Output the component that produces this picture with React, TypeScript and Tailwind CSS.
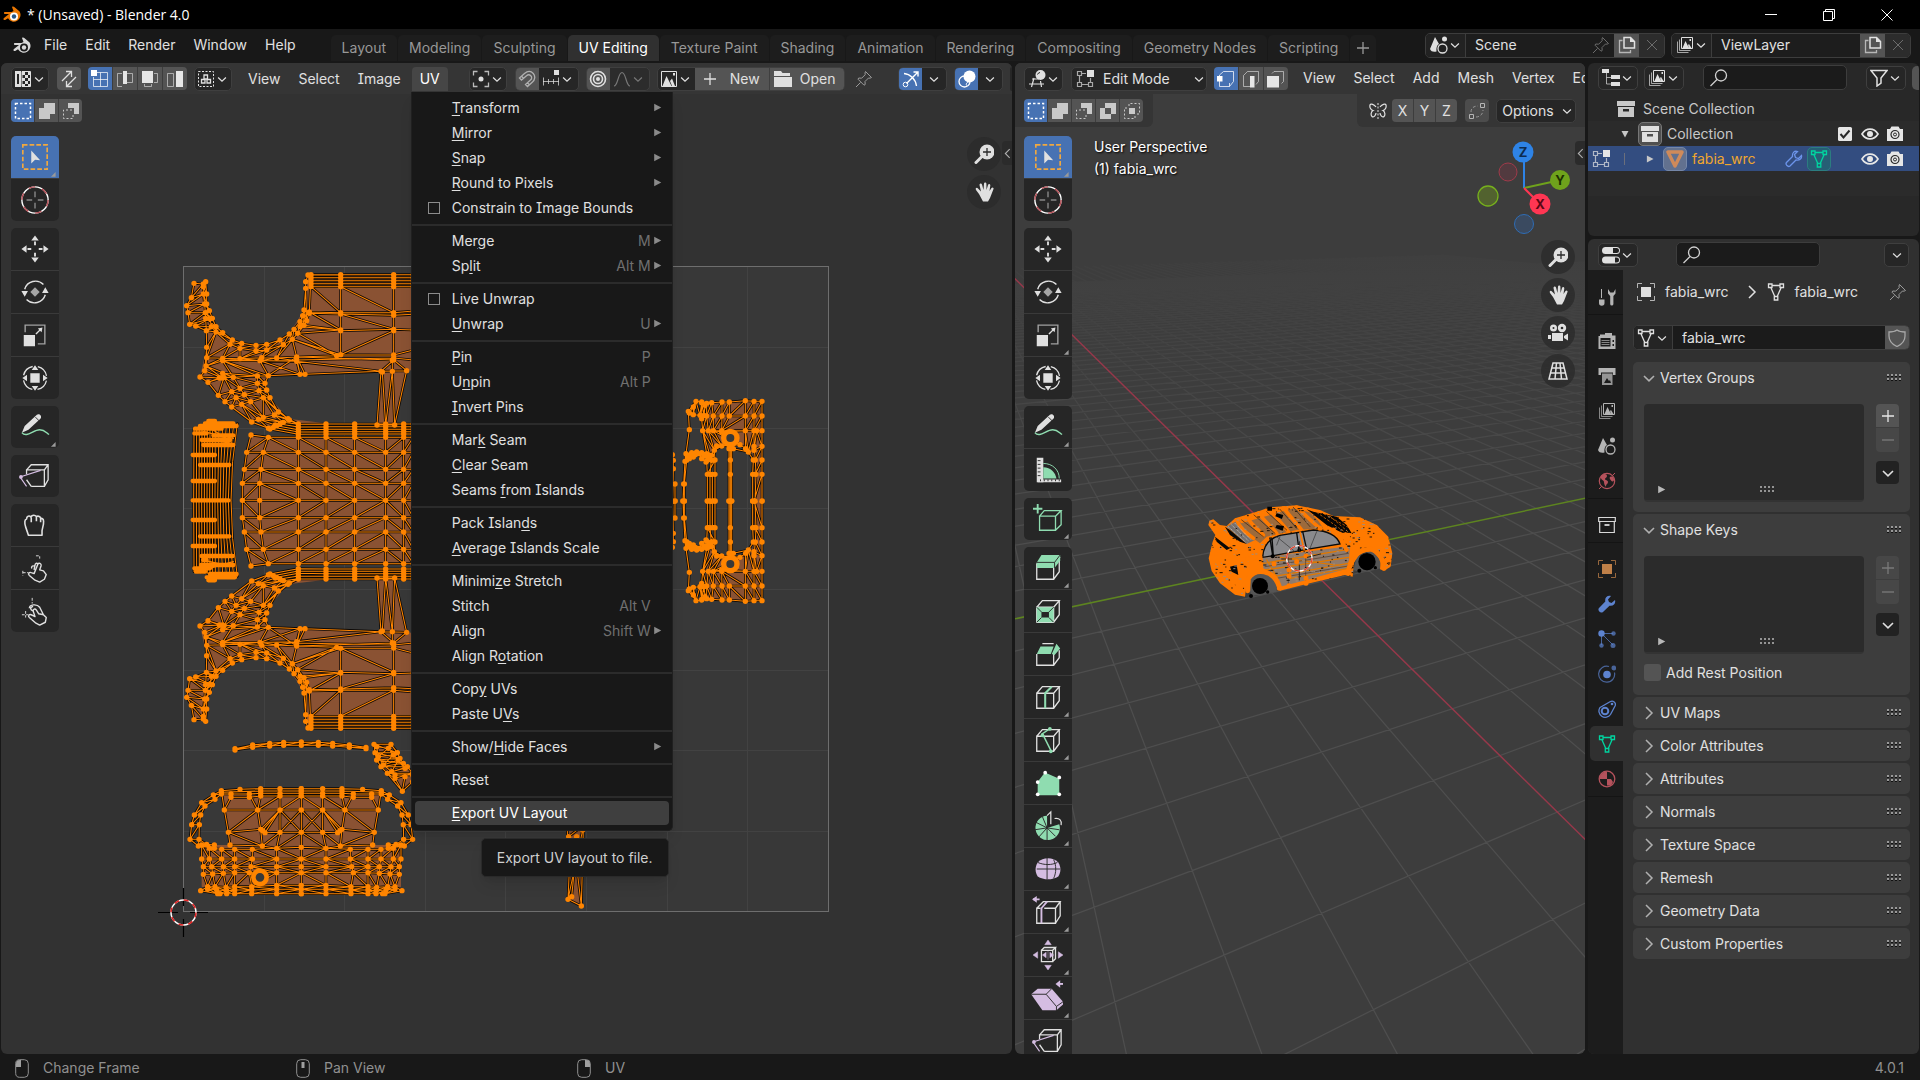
import React from "react";

/* ---------- small icons, 18 x 18 ---------- */

const I = "fill-none stroke-current";

const glyphs: Record<string, React.ReactNode> = {
  uvEditor: (
    <>
      <path d="M1 1h6v16H1zM3 4h2v10H3z" fill="currentColor" fillRule="evenodd" />
      <path d="M8 1.5h8.5v15H8z" className={I} />
      <path d="M8 2h3v3h3v3h-3v3h3v3h-3v2H8v-2h3v-3H8V8h3V5H8zM14 2h2v3h-2zM14 8h2v3h-2zM14 14h2v2h-2z" fill="currentColor" />
    </>
  ),
  sync: <path className={I} strokeWidth="1.3" d="M2 11 11 2M6 1.500h5.500V7M16 7 7 16M12 16.500H6.500V11" />,
  vertMode: (
    <>
      <path className={I} opacity=".7" d="M6 2.500h10.500v14H2.500V7M9.500 2.500v14M2.500 9.500h14" />
      <path d="M0 0h6v6H0z" fill="currentColor" />
    </>
  ),
  edgeMode: (
    <>
      <path className={I} opacity=".6" d="M6 3.500H1.500v13H6M11 3.500h5.500v9H11" />
      <path d="M7 1h4v13H7z" fill="currentColor" />
    </>
  ),
  faceMode: (
    <>
      <path className={I} opacity=".6" d="M3.500 14v2.500h7V14M13 3.500h3.500v9H13" />
      <path d="M1 1h11v12H1z" fill="currentColor" />
    </>
  ),
  islandMode: (
    <>
      <path className={I} opacity=".6" d="M1.500 3.500h6v13h-6z" />
      <path d="M10 1h7v16h-7z" fill="currentColor" />
    </>
  ),
  sticky: (
    <>
      <path className={I} strokeDasharray="2 1.500" d="M1.500 1.500h15v15h-15z" />
      <path className={I} strokeWidth="1.300" d="M7 5h3.500v4H7zM4.500 9.500H8V13H4.500zM10 9.500h3.500V13H10z" />
    </>
  ),
  pivot: (
    <>
      <path className={I} opacity=".8" strokeWidth="1.300" d="M1.500 5.500v-4h4M12.500 1.500h4v4M16.500 12.500v4h-4M5.500 16.500h-4v-4" />
      <circle cx="9" cy="9" r="2.500" fill="currentColor" />
    </>
  ),
  magnet: (
    <path className={I} strokeWidth="1.300" d="M1.500 8 6.500 3.500C9.500 1 13 1 15.300 3.500S17 10 14.500 12L9.500 16.500 7.500 14.500 12.500 10C14 8.700 14 7 12.800 5.800S9.700 4.700 8.500 5.800L3.500 10zM3.500 6.200 5.500 8.200M11.500 15 9.500 12.800" />
  ),
  snapInc: (
    <>
      <path className={I} opacity=".75" d="M1 11.500h16M1.500 7.500v8M6.500 9v5M11.500 9v5M16.500 7.500v8" />
      <path d="M12 0h5v5h-5z" fill="currentColor" />
    </>
  ),
  prop: (
    <>
      <circle cx="9" cy="9" r="7.500" className={I} strokeWidth="1.600" />
      <circle cx="9" cy="9" r="4.500" className={I} strokeWidth="1.600" />
      <circle cx="9" cy="9" r="2" fill="currentColor" />
    </>
  ),
  falloff: <path className={I} strokeWidth="1.200" d="M1 16C5 16 5 2.500 9 2.500S13 16 17 16" />,
  image: (
    <>
      <path className={I} d="M1.500 1.500h15v15h-15z" />
      <path d="M2.500 16 6.500 6l5 10zM13 3h2v2.500h-2z" fill="currentColor" />
      <path d="M10 11l2-2.500 3 7.500h-3z" fill="currentColor" />
    </>
  ),
  images: (
    <>
      <path className={I} opacity=".7" d="M1.500 5.500v11h11M3.500 3.500v11h11" />
      <path className={I} d="M5.500 1.500h11v11h-11z" />
      <path d="M6.500 12 9.500 5l3.500 7zM13.500 3h1.500v2h-1.500zM12 9l1-1 2.500 4H13z" fill="currentColor" />
    </>
  ),
  plus: <path className={I} strokeWidth="1.300" d="M9 3v12M3 9h12" />,
  minus: <path className={I} strokeWidth="1.300" d="M3 9h12" />,
  folder: <path d="M0 1h7l1.500 2H16v3H0zM0 7h18v10H0z" fill="currentColor" />,
  pin: <path className={I} d="M10.500 1.500l6 6-1.500.7-1.500-.2-3.500 3.500.2 3-1.200.7-6-6 .7-1.200 3 .2L10.200 4.700 10 3zM5.500 12.500 1 17" />,
  gizmo: (
    <>
      <path className={I} strokeWidth="1.400" d="M2 3.500C8 4 13.500 9 14.500 16M4.500 13.500 15.500 2.500M11.500 2H16v4.500" />
      <circle cx="3.500" cy="14.500" r="2.300" className={I} />
    </>
  ),
  overlay: (
    <>
      <circle cx="6.500" cy="11.500" r="5.500" className={I} strokeWidth="1.300" />
      <circle cx="11.500" cy="6.500" r="6" fill="currentColor" />
      <path d="M8.500 15.500a2.500 2.500 0 0 1 2-3.500" className={I} />
    </>
  ),
  view3d: (
    <>
      <path className={I} strokeWidth="1.200" d="M4 9h7M1 14h15M6 8 3.500 17M12.500 11l1 6" />
      <circle cx="12.500" cy="5" r="5" fill="currentColor" />
      <path d="M9.500 4.500a3 3 0 0 1 2.500-2" stroke="#222" fill="none" />
    </>
  ),
  editMode: (
    <>
      <path className={I} opacity=".7" strokeWidth="1.200" d="M1.500 1.500h4v4h-4zM1.500 12.500h4v4h-4zM12.500 12.500h4v4h-4zM3.500 5.500v7M5.500 14.500h7M5.500 3.500H10M14.500 8v4.500" />
      <path d="M11 0h7v7h-7z" fill="currentColor" />
    </>
  ),
  cubeVert: (
    <>
      <path className={I} opacity=".75" d="M2.500 5 6.500 1.500h10v10l-4 5h-10zM12.500 16.500V13" />
      <path d="M0 6h5.500v5.500H0z" fill="currentColor" />
    </>
  ),
  cubeEdge: (
    <>
      <path className={I} opacity=".6" d="M9.500 16.500h-8v-11l4-4h11v10l-2.500 3" />
      <path d="M8 6h4.500v11.500H8z" fill="currentColor" />
    </>
  ),
  cubeFace: (
    <>
      <path className={I} opacity=".6" d="M5 3.500l2-2h9.500v10l-2 2" />
      <path d="M0 6h12v11.500H0z" fill="currentColor" />
    </>
  ),
  selBox: <path className={I} strokeWidth="1.500" strokeDasharray="2.500 2" d="M1.500 1.500h15v15h-15z" />,
  selAdd: <path d="M6 1h11v11h-5v5H1V6h5z" fill="currentColor" opacity=".8" />,
  selSub: (
    <>
      <path d="M6 1h11v11h-5V6H6z" fill="currentColor" opacity=".8" />
      <path className={I} opacity=".8" strokeDasharray="2 2" d="M10 8H1.500v8.500h9.500V13" />
    </>
  ),
  selXor: <path d="M6 1h11v11h-5v5H1V6h5zM6 6v6h6V6z" fillRule="evenodd" fill="currentColor" opacity=".8" />,
  selAnd: (
    <>
      <path d="M6 6h6v6H6z" fill="currentColor" opacity=".8" />
      <path className={I} opacity=".8" strokeDasharray="2 2" d="M6 4V1.500h10.500V12H14M4 6H1.500v10.500H12V14" />
    </>
  ),
  butterfly: (
    <>
      <path className={I} strokeWidth="1.200" d="M7 5C5.500 2.500 1.500 1 1 3s.5 5 3 5.500C2 9.500 1.500 13 3 14.500S7 13 7 11M11 5c1.500-2.500 5.500-4 6-2s-.5 5-3 5.500c2 1 2.500 4.500 1 6S11 13 11 11" />
      <path className={I} strokeDasharray="2 1.500" d="M9 1v16" />
    </>
  ),
  automerge: (
    <>
      <path className={I} d="M12.500 1.500h4v4h-4zM1.500 12.500h4v4h-4z" />
      <path className={I} strokeDasharray="3 2" opacity=".7" d="M3 10c0-4 3-6 7-6M8 15c4 0 7-3 7-7" />
    </>
  ),
  scene: (
    <>
      <path d="M5 1 0 13c1 3 4 3 6.500 2.500C6 12 7 9 9 8z" fill="currentColor" />
      <circle cx="12.500" cy="12.500" r="4.500" className={I} strokeWidth="1.300" />
      <circle cx="14.500" cy="3" r="2.500" fill="currentColor" />
    </>
  ),
  copy: (
    <>
      <path className={I} opacity=".7" strokeWidth="1.300" d="M4.500 4.500h-3v12h11V14" />
      <path className={I} strokeWidth="1.500" d="M6 1.500h6.500l4 4V12H6z" />
      <path d="M12 1v5h5z" fill="currentColor" />
    </>
  ),
  close: <path className={I} d="M4 4l10 10M14 4 4 14" />,
  tree: (
    <>
      <path className={I} opacity=".7" d="M4.500 4v11H9M4.500 8.500H9" />
      <path d="M0 0h7v4H0zM9 6h9v4H9zM9 13h9v4H9z" fill="currentColor" />
    </>
  ),
  search: (
    <>
      <circle cx="11" cy="6.500" r="5.500" className={I} strokeWidth="1.300" />
      <path className={I} strokeWidth="1.300" d="M7 10.500.500 17" />
    </>
  ),
  filter: <path className={I} strokeWidth="1.500" d="M1 1.500h16l-6 7.500v5l-4 3V9z" />,
  box: (
    <>
      <path d="M0 1h18v5H0z" fill="currentColor" />
      <path fillRule="evenodd" d="M1 7h16v10H1zM6 9v2.500h6V9z" fill="currentColor" />
    </>
  ),
  boxLine: (
    <>
      <path className={I} strokeWidth="1.200" d="M.700 1.500h16.600v4H.700zM1.700 5.500v11h14.600v-11" />
      <path className={I} strokeWidth="1.800" d="M6.500 9h5" />
    </>
  ),
  check: (
    <>
      <rect x="2" y="2" width="14" height="14" rx="1.500" fill="currentColor" />
      <path d="M4.500 9l3 3.500 6-7" stroke="#282828" strokeWidth="2" fill="none" />
    </>
  ),
  eye: (
    <>
      <path className={I} strokeWidth="1.700" d="M1 9c4-6.500 12-6.500 16 0-4 6.500-12 6.500-16 0z" />
      <circle cx="9" cy="9" r="3" fill="currentColor" />
    </>
  ),
  camera: (
    <>
      <path d="M1 4h3l1.500-2.500h7L14 4h3v12H1z" fill="currentColor" />
      <circle cx="9" cy="9.500" r="4" fill="none" stroke="#282828" strokeWidth="1.200" />
      <circle cx="9" cy="9.500" r="1.500" fill="none" stroke="#282828" />
    </>
  ),
  objTri: <path d="M2 2h14L9 16z" fill="none" stroke="currentColor" strokeWidth="3.500" strokeLinejoin="round" />,
  wrench: <path className={I} strokeWidth="1.300" d="M16.500 5.500l-3 3-3-1-1-3 3-3C9.500.500 7 2.500 7.500 6.500L1.500 12.500c-1.500 2 1.500 5 3.500 3.500l6-6c4 .5 6-1.500 5.500-4.500z" />,
  wrenchFill: <path d="M17 5l-3.500 3-2.500-1-1-2.500L13 1C9.500 0 6.500 2.500 7.300 6.500L1 13c-2 2.500 1.500 6 4 4l6.500-6.300C15.500 11.500 18 8.500 17 5z" fill="currentColor" />,
  mesh: <path className={I} strokeWidth="1.300" d="M1.500 1h3.500v3.500H1.500zM13 1h3.500v3.500H13zM7.300 13.500h3.500V17H7.300zM5 2.500h8M3.800 4.500l4 9M14.200 4.500l-4 9" />,
  props: (
    <>
      <rect x="0" y="1" width="18" height="7" rx="3.500" fill="currentColor" />
      <path d="M11 2h3.500a2.500 2.500 0 0 1 0 5H11z" fill="#222" />
      <rect x="0" y="10.500" width="18" height="7" rx="3.500" fill="currentColor" />
      <path d="M13 11.500h1.500a2.500 2.500 0 0 1 0 5H13z" fill="#222" />
    </>
  ),
  objBox: (
    <>
      <path className={I} opacity=".75" d="M.500 5V.500H5M13 .500h4.500V5M17.500 13v4.500H13M5 17.500H.500V13" />
      <path d="M4 4h10v10H4z" fill="currentColor" />
    </>
  ),
  shield: <path className={I} strokeWidth="1.300" d="M9 1c2 1.500 5 2 8 2v4c0 5-3.500 8.500-8 10.500C4.500 15.500 1 12 1 7V3c3 0 6-.5 8-2z" />,
  tools: (
    <>
      <path d="M3 1h1v9H3zM1 11.500h5.500V15a2.500 2.500 0 0 1-5.500 0zM10 1v4.500L12.200 8v8a1.500 1.500 0 0 0 3.200 0V8L17.500 5.500V1l-2 3.500h-3.200z" fill="currentColor" />
    </>
  ),
  render: (
    <>
      <path fillRule="evenodd" d="M2 2.500h5V1h7v2.500h3.500V17H.500V4H2zM2.500 6v8.500h10V6zM14.500 8v2H16V8zM14.500 12v2H16v-2z" fill="currentColor" />
      <path className={I} opacity=".7" d="M3.500 8.500h8M3.500 10.500h8M3.500 12.500h8" />
    </>
  ),
  output: (
    <>
      <path d="M.500 1h17v7H15V5.500H3V8H.500z" fill="currentColor" />
      <path fillRule="evenodd" opacity=".8" d="M4 6.500h10.500V18H4zM6 16l3-5 2 3 1-1 1 3z" fill="currentColor" />
    </>
  ),
  world: (
    <>
      <circle cx="9" cy="9" r="7.700" className={I} strokeWidth="1.200" />
      <path d="M3 4c3-3 6-2 6 0s-2 1.500-2 3 3 1 3 3-2 2-2 4-2-2-2-4-4-2-3-6zM12 5c2-1 4 0 4 2.500S14 10 13 8.500 11 6 12 5z" fill="currentColor" />
      <path className={I} d="M1 17l2.500-2.500M14.500 3.500 17 1" />
    </>
  ),
  particles: (
    <>
      <circle cx="3.500" cy="3.500" r="3.200" fill="currentColor" />
      <circle cx="15.500" cy="3.500" r="2.200" fill="currentColor" opacity=".7" />
      <circle cx="3.500" cy="15.500" r="2.200" fill="currentColor" opacity=".7" />
      <circle cx="15" cy="15.500" r="2.500" fill="currentColor" opacity=".7" />
      <path className={I} opacity=".7" d="M6 3.500h9M3.500 6v9M5 5l10 10" />
    </>
  ),
  physics: (
    <>
      <circle cx="9" cy="9.500" r="3.800" fill="currentColor" />
      <circle cx="15.800" cy="3" r="2.400" fill="currentColor" opacity=".7" />
      <path className={I} opacity=".7" strokeWidth="1.200" d="M11 1.500a8 8 0 1 0 5.500 6" />
    </>
  ),
  constraint: (
    <>
      <path className={I} strokeWidth="1.300" d="M2 7.500 12 1.700C15 0 18.500 2.500 17 6L12.500 14.500A6.300 6.300 0 1 1 2 7.500z" />
      <circle cx="7" cy="11" r="3.300" className={I} strokeWidth="2" />
      <circle cx="14" cy="4" r="1.300" fill="currentColor" />
    </>
  ),
  material: (
    <>
      <circle cx="9" cy="9" r="7.800" className={I} strokeWidth="1.300" />
      <path d="M9 1.500V9H1.500A7.500 7.500 0 0 1 9 1.500zM9 9h4l2 3-2 3.500H9z" fill="currentColor" />
    </>
  ),
  arrowR: <path d="M5 4.500l8.500 4.500L5 13.500z" fill="currentColor" />,
  arrowD: <path d="M4.500 5h9L9 13.500z" fill="currentColor" />,
  chevD: <path className={I} strokeWidth="1.600" d="M4 7l5 4.800L14 7" />,
  chevR: <path className={I} strokeWidth="1.500" d="M6 3l6 6-6 6" />,
  chevL: <path className={I} strokeWidth="1.500" d="M12 3 6 9l6 6" />,
};

function Ico({ n, s = "size-[18px]" }: { n: string; s?: string }) {
  return (
    <svg viewBox="0 0 18 18" className={`${s} shrink-0`} aria-hidden="true">
      {glyphs[n]}
    </svg>
  );
}

function BlenderLogo({ mono }: { mono?: boolean }) {
  const body = mono ? "#d8d8d8" : "#ea7600";
  return (
    <svg viewBox="0 0 18 17" className="h-[17px] w-[18px] shrink-0" aria-hidden="true">
      <path fill={body} d="M9 1c.8-1 2-.3 2.600.300l5 4.200A6.300 6.300 0 1 1 5 12.300L2.200 14c-1.400.5-2.400-1-1.200-2L6 8H2C.600 8 .600 6 2 6h6.500L10.500 5z" />
      <circle cx="11" cy="10.500" r="4" fill={mono ? "#181818" : "#fff"} />
      <circle cx="11" cy="10.500" r="2.200" fill={mono ? "#d8d8d8" : "#265787"} />
    </svg>
  );
}

/* ---------- tool icons, 32 x 32 ---------- */

const G = "#8fdcb0";
const V = "#d5bde2";
const W = "#e0e0e0";

const cube = <path d="M4 12h18v16H4zM4 12l6-7h18l-6 7M28 5v15l-6 8" fill="none" stroke={W} strokeWidth="1.400" />;

const toolGlyphs: Record<string, React.ReactNode> = {
  select: (
    <>
      <path d="M3 3h26v26H3z" fill="none" stroke="#f0a840" strokeWidth="1.800" strokeDasharray="5 2.200" />
      <path d="M12 9v14l4-4 5.500.500z" fill={W} />
    </>
  ),
  cursor: (
    <>
      <circle cx="16" cy="16" r="14" fill="none" stroke="#fff" strokeWidth="1.500" />
      <circle cx="16" cy="16" r="14" fill="none" stroke="#b34a52" strokeWidth="1.500" strokeDasharray="7 7.660" />
      <path d="M16 7v6M16 19v6M7 16h6M19 16h6" stroke="#888" strokeWidth="1.500" />
    </>
  ),
  move: (
    <>
      <path d="M16 1.500l4 5.500h-8zM16 30.500l4-5.500h-8zM1.500 16l5.500-4v8zM30.500 16l-5.500-4v8z" fill={W} />
      <path d="M16 8v4M16 20v4M8 16h4M20 16h4" stroke={W} strokeWidth="2" />
    </>
  ),
  rotate: (
    <>
      <path d="M5 13A12 12 0 0 1 25 8M27 19A12 12 0 0 1 7 24" fill="none" stroke={W} strokeWidth="1.500" />
      <path d="M1.500 15h7L5 21zM23.500 17h7L27 11z" fill={W} />
      <path d="M16 11l5 5-5 5-5-5z" fill="#a5a5a5" />
    </>
  ),
  scale: (
    <>
      <path d="M5.500 13V5.500h21v20H19" fill="none" stroke="#a0a0a0" strokeWidth="1.500" />
      <path d="M4 16h12v12H4z" fill={W} />
      <path d="M17 15l5-5" stroke={W} strokeWidth="1.500" />
      <path d="M24 8l-1 5-4-4z" fill={W} />
    </>
  ),
  transform: (
    <>
      <circle cx="16" cy="16" r="12.500" fill="none" stroke={W} strokeWidth="1.400" strokeDasharray="14 5.600" strokeDashoffset="-2.800" />
      <path d="M11 11h10v10H11zM16 2.500l3.500 5h-7zM16 29.500l3.500-5h-7zM2.500 16l5-3.500v7zM29.500 16l-5-3.500v7z" fill={W} />
    </>
  ),
  annotate: (
    <>
      <path d="M2 22l3-7L18 3c2-2 6 1 4 4L9 19z" fill={W} />
      <path d="M16.500 5.500l4 4" stroke="#2a2a2a" />
      <path d="M2 22c5 6 12-3 19-3 5 0 7 3 10 5" fill="none" stroke={G} strokeWidth="1.600" />
    </>
  ),
  measure: (
    <>
      <path d="M4 3h7v26H4z" fill={W} />
      <path d="M5 6h3M5 10h3M5 14h3M5 18h3M5 22h3" stroke="#2a2a2a" />
      <path d="M11 13c8 0 13 6 14 12H11z" fill={G} />
      <path d="M11 9c10 0 17 7 17 16" fill="none" stroke={G} />
      <path d="M5 26h25v3H5z" fill={W} />
      <path d="M8 26v2M12 26v2M16 26v2M20 26v2M24 26v2M28 26v2" stroke="#2a2a2a" />
    </>
  ),
  rip: (
    <>
      <path d="M13 27h14V9.500H8V14M8 9.500 13 4h18v16l-4 7M27 9.500 31 4M8 20l5 7" transform="translate(-1 0)" fill="none" stroke={W} strokeWidth="1.400" />
      <path d="M0 17l22-7M0 17l7 10" stroke={V} strokeWidth="1.200" />
      <circle cx="1" cy="17" r="2" fill={V} />
    </>
  ),
  grab: (
    <path d="M9 27 6 18c-1.500-5-1-8 1-8.500 0-3 3-4 4.500-2C13 5 16 5 17.500 7c2-1 4.500 0 4.500 2 3-.5 3.500 2 3 6l-1.500 7v5zM12 8v5M17.500 7.500V12M22 9v4" fill="none" stroke={W} strokeWidth="1.700" strokeLinejoin="round" />
  ),
  relax: (
    <>
      <path d="M16 29 10 24c-2-2 0-4 2-3l3 1 4-10c1-2 4-1 3.500 1.500L21 18l4 1 3 4-2 5-5 3zM19 12c-1-2-3-1-3 1l-1 5M15 14c-2-1-3 1-2.500 2.500" fill="none" stroke={W} strokeWidth="1.500" strokeLinejoin="round" />
      <path d="M3 19v5M3 21h6M17 3h4v3" fill="none" stroke={W} strokeDasharray="3 1.500" />
    </>
  ),
  pinch: (
    <>
      <path d="M17 29 10 23c-2-2 0-4 2-3l4 2-2-6c0-2 2-3 3.500-1l2.500 4 5 1 3 3-1 5-6 3zM10 13c0-4 8-5 11-1l4 8M14 16c-3-1-4-4 0-5" fill="none" stroke={W} strokeWidth="1.500" strokeLinejoin="round" />
      <path d="M2 20h7M6 16v7M13 2v6" fill="none" stroke={W} strokeDasharray="3 1.500" />
    </>
  ),
  addCube: (
    <>
      <path d="M7 13h17v15H7zM7 13l5-6h18l-6 6M30 7v15l-6 6" fill="none" stroke={G} strokeWidth="1.400" />
      <path d="M5 0v10M0 5h10" stroke={G} strokeWidth="2" />
    </>
  ),
  extrude: (
    <>
      {cube}
      <path d="M4 10l5-8h20v6l-6 8H4z" fill={G} />
      <path d="M4 10h19l6-8M23 10v6" fill="none" stroke="#2a2a2a" />
    </>
  ),
  inset: (
    <>
      {cube}
      <path fillRule="evenodd" d="M4 12h18v16H4zM9 17v6h8v-6z" fill={G} />
      <path d="M4 12l5 5M22 12l-5 5M4 28l5-5M22 28l-5-5" stroke="#2a2a2a" />
    </>
  ),
  bevel: (
    <>
      <path d="M4 16v12h18V16M22 28l6-8V12M10 5h12" fill="none" stroke={W} strokeWidth="1.400" />
      <path d="M4 16l4-8h14l-3 8zM20 16l5-11 4 5-6 7z" fill={G} />
    </>
  ),
  loopcut: (
    <>
      {cube}
      <path d="M13 28V12l7-7" fill="none" stroke={G} strokeWidth="2.200" />
    </>
  ),
  knife: (
    <>
      {cube}
      <path d="M9 10l9-6M11 11l8 16" stroke={G} strokeWidth="1.600" />
      <circle cx="10" cy="11" r="2" fill={G} />
      <circle cx="18" cy="4" r="2" fill={G} />
      <circle cx="19" cy="28" r="2" fill={G} />
    </>
  ),
  polybuild: (
    <>
      <path d="M6 28V15l7-9 14 6v16z" fill={G} stroke={G} strokeWidth="2" />
      <g fill="#fff">
        <circle cx="13" cy="5" r="2" />
        <circle cx="5" cy="15" r="2" />
        <circle cx="28" cy="10" r="2" />
        <circle cx="5" cy="28" r="2" />
        <circle cx="28" cy="28" r="2" />
      </g>
    </>
  ),
  spin: (
    <>
      <path d="M15 18V5A13 13 0 1 0 28 14z" fill={G} />
      <path d="M15 18 3 12M15 18 2 20M15 18 6 28M15 18v13M15 18l9 9M15 18l13 2M15 18 10 6" stroke="#2a2a2a" />
      <path d="M15 5l4-4v13M23 8c5-1 8 2 7 7" fill="none" stroke={W} strokeWidth="1.300" />
    </>
  ),
  smooth: (
    <>
      <path d="M5 9c6-6 16-6 22 0 3 5 3 10 0 15-6 4-16 4-22 0-3-5-3-10 0-15z" fill={V} />
      <path d="M4 16h25M15 4v23M5 9c7 3 15 3 21 0M22 6c3 6 3 14 0 20" fill="none" stroke="#2a2a2a" />
    </>
  ),
  edgeslide: (
    <>
      <path d="M12 12h12v16H4V12h4M4 12l7-7h18l-5 7M29 5v15l-5 8" fill="none" stroke={W} strokeWidth="1.400" />
      <path d="M9 28V12l6-7M0 2.500h7" fill="none" stroke={V} strokeWidth="2" />
      <path d="M4-1v7l-5-3.500z" fill={V} />
    </>
  ),
  shrink: (
    <>
      <path d="M9 11h12v12H9zM9 11l3-3h12l-3 3M24 8v12l-3 3" fill="none" stroke={W} strokeWidth="1.400" />
      <path d="M16 0l3.500 5h-7zM16 32l3.500-5h-7zM0 16l5-3.500v7zM32 16l-5-3.500v7zM10 16l4-3v6zM22 16l-4-3v6zM16 11v10" fill={V} stroke={V} strokeWidth=".500" />
    </>
  ),
  shear: (
    <>
      <path d="M-2 12l7-6h15l12 14v3l-7 6H10z" fill={V} />
      <path d="M-2 12h16l11 13v5M14 12l6-6M25 25l7-5" fill="none" stroke="#2a2a2a" />
      <path d="M26 1h6" stroke={V} strokeWidth="2" />
      <path d="M29-3v8l-5-4z" fill={V} />
    </>
  ),
};

function ToolGroup({ tools, corner = [] }: { tools: [string, string][]; corner?: string[] }) {
  return (
    <div className="flex flex-col gap-px overflow-hidden rounded-[5px] bg-[#3a3a3a]">
      {tools.map(([id, label]) => (
        <button
          key={id}
          aria-label={label}
          className={
            id === "select"
              ? "relative flex h-[42px] w-12 items-center justify-center bg-[#4772b3]"
              : "relative flex h-[42px] w-12 items-center justify-center bg-[#262626]"
          }
        >
          <svg viewBox="0 0 32 32" className="size-[30px] overflow-visible" aria-hidden="true">
            {toolGlyphs[id]}
            {corner.includes(id) && <path d="M39 32v5h-5z" transform="translate(-1 0)" fill="#9a9a9a" />}
          </svg>
        </button>
      ))}
    </div>
  );
}

/* ---------- header controls ---------- */

const dd = "flex h-6 shrink-0 items-center justify-center rounded-[5px] border border-[#3f3f3f] bg-[#262626] text-[#e0e0e0]";

function DropIcon({ n, label, w = "w-[39px]" }: { n: string; label: string; w?: string }) {
  return (
    <button aria-label={label} className={`${dd} ${w}`}>
      <Ico n={n} />
      <Ico n="chevD" s="size-[14px]" />
    </button>
  );
}

function Segments({ items, w }: { items: [string, string][]; w: string }) {
  return (
    <div className="flex h-[23px] shrink-0 gap-px overflow-hidden rounded-[4px] bg-[#3d3d3d]">
      {items.map(([n, label], i) => (
        <button
          key={n}
          aria-label={label}
          className={`flex h-full items-center justify-center ${w} ${i === 0 ? "bg-[#4772b3] text-white" : "bg-[#545454] text-[#e6e6e6]"}`}
        >
          <Ico n={n} />
        </button>
      ))}
    </div>
  );
}

/* ---------- UV menu ---------- */

type Row = { t: string; k?: number; sc?: string; sub?: boolean; box?: boolean; on?: boolean };

const menu: Row[][] = [
  [
    { t: "Transform", k: 0, sub: true },
    { t: "Mirror", k: 0, sub: true },
    { t: "Snap", k: 0, sub: true },
    { t: "Round to Pixels", k: 0, sub: true },
    { t: "Constrain to Image Bounds", box: true },
  ],
  [
    { t: "Merge", k: 3, sc: "M", sub: true },
    { t: "Split", k: 2, sc: "Alt M", sub: true },
  ],
  [
    { t: "Live Unwrap", box: true },
    { t: "Unwrap", k: 0, sc: "U", sub: true },
  ],
  [
    { t: "Pin", k: 0, sc: "P" },
    { t: "Unpin", k: 1, sc: "Alt P" },
    { t: "Invert Pins", k: 0 },
  ],
  [
    { t: "Mark Seam", k: 3 },
    { t: "Clear Seam", k: 0 },
    { t: "Seams from Islands", k: 6 },
  ],
  [
    { t: "Pack Islands", k: 10 },
    { t: "Average Islands Scale", k: 0 },
  ],
  [
    { t: "Minimize Stretch", k: 6 },
    { t: "Stitch", sc: "Alt V" },
    { t: "Align", sc: "Shift W", sub: true },
    { t: "Align Rotation", k: 7 },
  ],
  [
    { t: "Copy UVs", k: 3 },
    { t: "Paste UVs", k: 7 },
  ],
  [{ t: "Show/Hide Faces", k: 5, sub: true }],
  [{ t: "Reset" }],
  [{ t: "Export UV Layout", k: 0, on: true }],
];

function MenuLabel({ t, k }: { t: string; k?: number }) {
  if (k === undefined) return <span className="grow">{t}</span>;
  return (
    <span className="grow">
      {t.slice(0, k)}
      <u className="underline-offset-2">{t[k]}</u>
      {t.slice(k + 1)}
    </span>
  );
}

function UvMenu() {
  return (
    <div role="menu" className="absolute -left-px top-full z-30 mt-px w-[262px] rounded-b-[5px] border-x border-b border-[#202020] bg-[#181818] pb-1 pt-1 shadow-lg">
      {menu.map((group, gi) => (
        <div key={gi}>
          {gi > 0 && <hr className="my-[3px] border-t-2 border-[#2b2b2b]" />}
          {group.map((r) => (
            <div key={r.t} className="h-[25px] px-[3px]">
              {r.box ? (
                <label role="menuitemcheckbox" aria-checked="false" className="flex h-6 items-center pl-[13px] text-[#e0e0e0]">
                  <input type="checkbox" className="mr-[12px] size-[12px] appearance-none border border-[#8c8c8c]" />
                  {r.t}
                </label>
              ) : (
                <button
                  role="menuitem"
                  className={
                    r.on
                      ? "flex h-6 w-full items-center rounded-[4px] bg-[#3f3f3f] pl-[37px] pr-1 text-left text-white"
                      : "flex h-6 w-full items-center pl-[37px] pr-1 text-left text-[#e0e0e0]"
                  }
                >
                  <MenuLabel t={r.t} k={r.k} />
                  <span className="text-[#707070]">{r.sc}</span>
                  <span className="flex w-[14px] justify-center text-[#8a8a8a]">{r.sub && <Ico n="arrowR" s="size-[15px]" />}</span>
                </button>
              )}
            </div>
          ))}
        </div>
      ))}
      <div role="tooltip" className="absolute left-[69px] top-full mt-2 h-[39px] whitespace-nowrap rounded-[5px] border border-[#2a2a2a] bg-[#181818] px-[15px] leading-[37px] text-[#cfcfcf] shadow-lg">
        Export UV layout to file.
      </div>
    </div>
  );
}

/* ---------- UV mesh ---------- */

type P = [number, number];
const pts = (s: string): P[] => s.trim().split(/\s+/).map((p) => p.split(",").map(Number) as P);
const line = (l: P[]) => "M" + l.map((p) => p.join(" ")).join("L");

function band(a: P[], b: P[], flip = false): P[][] {
  const n = Math.max(a.length, b.length);
  const at = (l: P[], i: number) => l[Math.round((i * (l.length - 1)) / (n - 1))];
  const out: P[][] = [a, b];
  for (let i = 0; i < n; i++) {
    out.push([at(a, i), at(b, i)]);
    if (i < n - 1) out.push(flip ? [at(a, i), at(b, i + 1)] : [at(a, i + 1), at(b, i)]);
  }
  return out;
}

function Mesh({ fill, lines, dots = true }: { fill?: string; lines: P[][]; dots?: boolean }) {
  const d = lines.map(line).join("");
  const seen = new Set(lines.flat().map((p) => p.join(" ")));
  return (
    <g fill="none" strokeLinecap="round" strokeLinejoin="round">
      {fill && <path d={fill} fill="#8a5233" fillRule="evenodd" />}
      <path d={d} stroke="#0c0805" strokeWidth="8" />
      <path d={d} stroke="#ff8500" strokeWidth="3.200" />
      {dots && <path d={[...seen].map((p) => `M${p}h.1`).join("")} stroke="#ff8500" strokeWidth="16" />}
    </g>
  );
}

const arch = pts("617,455 620,492 620,522 628,542 637,565 648,590 668,608 697,630 725,640 768,646 800,643 840,630 868,612 882,598 900,575 908,557 912,540");
const archLow = pts("610,470 610,492 614,522 616,548 617,565 619,602 648,606 690,643 720,655 768,662 800,660 850,644 877,628 893,610 912,586 920,572 928,546");
const sill = pts("620,652 620,683 668,685 720,686 785,683 830,684 890,681");
const sill2 = pts("614,722 618,708 668,692 780,692 890,692");
const rearO = pts("600,741 624,757 655,796 675,815 695,831 755,876 805,895");
const rearM = pts("658,744 672,742 695,785 708,803 725,823 775,868 826,885");
const rearM2 = pts("668,730 700,742 720,775 733,794 752,815 790,862 850,877");
const rearM3 = pts("772,738 772,760 777,782 790,803 823,855 868,870");
const rearI = pts("805,737 795,760 800,780 810,803 835,846 864,866 895,882");

const stripY = [434, 443, 452, 461, 470];
const footY = [882, 890, 898, 905, 912];

const sideLines: P[][] = [
  ...band(arch, archLow),
  ...band(pts("582,460 574,503 560,527 564,548 569,583 587,588 619,602"), pts("610,462 610,492 614,522 616,548 630,566 634,590 648,606")),
  ...band(archLow.slice(5, 13), sill),
  ...band(sill, sill2, true),
  ...band(sill2, pts("600,741 668,744 700,742 772,738 805,737 900,733"), true),
  ...band(rearO, rearM),
  ...band(rearM, rearM2, true),
  ...band(rearM2, rearM3),
  ...band(rearM3, rearI, true),
  ...stripY.map((y) => pts(`933,${y} 1022,${y} 1181,${y} 1240,${y}`)),
  ...footY.map((y, i) => pts(`${850 - i * 10},${877 + i * 5} 895,${y + 1} 978,${y} 1064,${y} 1157,${y} 1211,${y} 1240,${y}`)),
  ...[895, 978, 1064, 1157, 1211].map((x) => pts(`${x},882 ${x},912`)),
  ...[
    "928,546 1022,548 1181,548 1240,543",
    "928,550 1022,552 1181,556 1240,553",
    "900,590 1022,600",
    "1022,602 1181,598 1240,600",
    "890,681 1010,677 1022,674 1181,675 1240,660",
    "890,690 1181,684 1240,690",
    "668,690 890,694 1143,724",
    "890,681 1181,690",
    "933,470 1022,548",
    "1022,470 1181,548",
    "928,546 1022,600",
    "1022,552 1181,598",
    "1022,674 1181,602",
    "912,586 1022,600",
    "893,610 1022,600",
    "893,610 1010,677",
    "877,628 1010,677",
    "877,628 1022,674",
    "924,435 1022,434",
    "933,434 928,546",
    "924,435 917,455 917,475 912,540",
    "917,475 920,572",
    "1022,434 1022,552 1022,600 1022,674",
    "1181,434 1181,548 1181,556 1181,598 1181,675 1181,690",
    "890,681 900,733 915,733 1143,724 1220,722",
    "890,681 915,733",
    "890,681 805,737",
    "1143,724 1181,690 1220,722",
    "1177,690 1177,724 1157,885",
    "1143,724 1131,885 1157,885 1184,885",
    "1147,726 1157,885",
    "1177,724 1184,885",
    "1220,722 1184,885",
  ].map(pts),
];

const sideFill =
  "M582 460 617 455 620 522 637 565 668 608 725 640 800 643 868 612 912 540 924 435 1240 434V720L1220 722 1184 882H1240V912H978L805 895 695 831 600 741 620 652 619 602 569 583 560 527ZM805 737 795 760 810 803 864 866 978 880H1131L1143 724Z";

const hoodY = [922, 967, 1018, 1060, 1111, 1163, 1206, 1258, 1301];
const hoodL = [753, 740, 733, 727, 727, 727, 733, 740, 753];
const hoodM = [805, 790, 783, 779, 779, 779, 783, 790, 805];
const hoodX = [895, 978, 1064, 1157, 1211, 1240];
const hoodRows: P[][] = hoodY.map((y, i) => [
  [hoodL[i], i === 0 ? 915 : i === 8 ? 1308 : y],
  [hoodM[i], y],
  ...hoodX.map((x): P => [x, y]),
]);
const hoodLines: P[][] = [
  ...hoodRows,
  ...hoodRows[0].map((_, c) => hoodRows.map((r) => r[c])),
  ...hoodRows.slice(1).flatMap((r, i) =>
    r.slice(1).map((_, c): P[] => {
      const fall = i < 4 ? c !== 0 && c < 5 : c === 0 || c >= 5;
      return fall ? [hoodRows[i][c], r[c + 1]] : [hoodRows[i][c + 1], r[c]];
    })
  ),
];

const bumperRows: [number, number, number][] = [
  [873, 625, 645], [880, 615, 700], [888, 600, 710], [896, 585, 665], [910, 583, 620], [916, 640, 700], [930, 605, 690], [945, 610, 700],
  [975, 578, 645], [1005, 600, 688], [1053, 578, 645], [1111, 578, 686], [1170, 578, 645], [1219, 600, 688], [1248, 578, 645],
  [1278, 605, 698], [1290, 610, 620], [1305, 603, 700], [1315, 583, 630], [1325, 588, 615], [1332, 630, 710], [1342, 620, 705], [1351, 625, 645],
];

function Bumper() {
  const strands = Array.from({ length: 15 }, (_, i) => {
    const x = 582 + i * 8;
    const bend = i > 8 ? (i - 8) * 3 : 0;
    return `M${x + bend} ${895 - i}Q${x - 2 - bend} 1111 ${x + bend} ${1325 + i}`;
  }).join("");
  return (
    <g fill="none" strokeLinecap="round">
      <path d={strands} stroke="#0c0805" strokeWidth="8" />
      <path d={strands} stroke="#ff8500" strokeWidth="3" />
      <path d="M610 905 700 925M605 925 695 940M605 1290 700 1310M610 1320 700 1295M640 900 690 935" stroke="#ff8500" strokeWidth="4" />
      <path d={bumperRows.map(([y, a, b]) => `M${a} ${y}H${b}`).join("")} stroke="#ff8500" strokeWidth="13" />
    </g>
  );
}

const backRows = [
  "605,735 628,745 665,748 704,748 757,748 830,745 904,742",
  "605,777 628,777 665,777 704,777 757,777 830,777 904,777",
  "610,800 635,800 670,800 704,800 753,800 830,800 904,800",
  "610,823 638,822 670,820 704,818 748,818 830,818 904,818",
  "623,860 645,860 678,862 704,860 755,860 830,856 904,856",
  "623,868 650,870 680,872 704,870 755,870 830,868 904,868",
  "653,881 660,881 680,881 704,881 755,881 830,881 904,881",
].map(pts);

const backLines: P[][] = [
  ...backRows.slice(1).flatMap((r, i) => band(backRows[i], r, i % 2 === 0)),
  ...band(
    pts("664,572 640,585 605,608 583,645 575,674 570,718 595,738 643,745"),
    pts("664,582 645,598 615,618 602,645 598,674 597,718 620,733 643,735")
  ),
  ...[
    "664,572 720,568 782,566 840,566 904,566",
    "664,577 782,573 904,573",
    "664,582 693,582 748,582 782,580 840,580 904,580",
    "693,592 748,592 782,588 840,588 904,588",
    "664,572 673,630 685,697 690,735",
    "693,582 693,592 673,630",
    "748,582 773,630",
    "782,566 782,588 773,630 782,688 787,738",
    "840,566 840,588 840,630 840,697 830,745",
    "904,566 904,630 904,697 904,742",
    "673,630 773,630 840,630 904,630",
    "685,697 782,688 795,698 840,697 904,697",
    "690,735 787,738 830,745",
    "773,630 685,697",
    "840,588 773,630",
    "904,588 840,630",
    "840,630 782,688",
    "840,630 788,692",
    "840,630 795,698",
    "904,630 840,697",
    "840,630 904,697",
    "840,697 787,738",
    "904,697 830,745",
    "685,697 787,738",
    "602,872 653,881",
    "602,872 623,860",
  ].map(pts),
];

const visor = band(
  pts("705,446 758,435 809,430 851,427 904,426 955,427 998,430 1048,435 1098,442"),
  pts("705,450 758,442 809,438 851,436 904,436 955,436 998,438 1048,442 1098,446")
);

const mirrorLines: P[][] = [
  ...band(pts("1122,433 1125,458 1130,480 1143,500 1162,520 1185,535"), pts("1173,433 1192,458 1200,475 1210,490 1222,500 1238,520"), true),
  ...band(pts("1130,440 1135,470 1150,495 1175,515"), pts("1165,445 1180,465 1195,480 1215,505")),
  ...["1162,520 1207,574 1238,545", "1185,535 1207,574", "1215,530 1207,574", "1185,525 1238,525"].map(pts),
];

const frontLines: P[][] = [
  ...[
    "818,93 820,190 820,215 817,232",
    "825,93 825,144",
    "849,93 851,144 855,212 858,235 868,307 865,362 888,392",
    "853,93 853,144 860,215",
    "991,93 991,173 991,216 991,262",
    "987,93 987,250",
    "995,93 995,250",
    "922,93 922,173 920,213",
    "930,93 930,173 935,230",
    "945,93 945,173 945,216 943,245",
    "937,93 937,173",
    "922,173 945,216",
    "1058,93 1058,173 1060,216 1045,240",
    "1065,93 1068,173 1066,216 1062,257",
    "1086,93 1086,173 1086,216 1086,257 1086,304 1086,348 1086,392",
    "1062,93 1086,173",
    "1066,173 1086,216",
    "1066,216 1086,257",
    "855,212 868,220 880,225 895,235 905,220 918,210 935,215",
    "858,235 875,238 890,240 905,238 920,235",
    "862,225 872,232 886,232 912,228 925,222",
    "920,235 908,304",
    "1000,250 1045,240",
    "950,258 991,262",
  ].map(pts),
  ...band(pts("930,230 943,245 965,258 1020,262 1037,250 1045,240 1062,245 1086,257"), pts("908,304 925,304 940,304 965,300 1036,304 1062,304 1070,304 1086,304")),
  ...band(pts("908,304 925,304 940,304 965,304 1036,304 1062,304 1086,304"), pts("905,340 920,348 940,348 966,348 988,348 1036,348 1062,348 1086,348"), true),
  ...band(pts("905,340 920,348 940,348 966,348 988,348 1036,348 1062,348 1086,348"), pts("905,388 920,386 935,388 966,390 988,390 1036,394 1062,392 1086,392"), true),
  ...band(pts("868,357 880,352 900,350 912,350"), pts("880,375 888,392 905,390 915,380")),
];

function UvCanvas() {
  return (
    <svg className="absolute inset-0 size-full" aria-label="UV layout">
      <g transform="translate(-1 -63)">
        <rect x="183" y="266" width="646" height="646" fill="#383838" />
        <path
          d="M183.500 347.500h645M183.500 428.500h645M183.500 508.500h645M183.500 589.500h645M183.500 670.500h645M183.500 750.500h645M183.500 831.500h645M264.500 266v646M344.500 266v646M425.500 266v646M505.500 266v646M586.500 266v646M667.500 266v646M747.500 266v646"
          stroke="#424242"
        />
        <rect x="183.500" y="266.500" width="645" height="645" fill="none" stroke="#6e6e6e" />
        <g transform="translate(0 130) scale(.33333)">
          <Mesh fill={sideFill} lines={sideLines} />
          <g transform="translate(0 2229) scale(1 -1)">
            <Mesh fill={sideFill} lines={sideLines} />
          </g>
          <Mesh fill="M753 915 805 922H1240V1301H805L753 1308 733 1206 727 1111 733 1018Z" lines={hoodLines} />
          <Bumper />
        </g>
        <g transform="translate(0 600) scale(.33333)">
          <Mesh lines={visor} />
          <Mesh fill="M1122 433 1173 433 1238 520V545L1207 574 1162 520 1130 480Z" lines={mirrorLines} />
          <path d="M664 572H904V881H653L605 860V735L690 735Z" fill="#8a5233" />
          <Mesh lines={backLines} />
          <g transform="translate(1808 0) scale(-1 1)">
            <path d="M664 572H904V881H653L605 860V735L690 735Z" fill="#8a5233" />
            <Mesh lines={backLines} />
          </g>
          <circle cx="780" cy="832" r="20" fill="#383838" stroke="#ff8500" strokeWidth="14" />
        </g>
        <g transform="translate(400 470) scale(.33333)">
          {["", "translate(0 186) scale(1 -1)"].map((t) => (
            <g key={t} transform={t || undefined}>
              <Mesh fill="M930 230 965 258H1020L1058 235V93H1086V392H905Z" lines={frontLines} />
              <circle cx="991" cy="282" r="20" fill="#383838" stroke="#ff8500" strokeWidth="16" />
            </g>
          ))}
          <Mesh
            fill="M500 1040 504 1288 544 1308 551 1040Z"
            lines={["500,1040 508,1200 504,1288 544,1308 551,1040", "504,1288 548,1080", "515,1280 525,1180 530,1100", "544,1308 530,1190", "506,1100 545,1070"].map(pts)}
          />
        </g>
        <path d="M158 912.500h20M190 912.500h18M183.500 888v18M183.500 919v18" stroke="#000" strokeWidth="1.200" />
        <circle cx="183.500" cy="912.500" r="12.500" fill="none" stroke="#fff" strokeWidth="1.500" />
        <circle cx="183.500" cy="912.500" r="12.500" fill="none" stroke="#e02020" strokeWidth="1.500" strokeDasharray="5 4.800" />
      </g>
    </svg>
  );
}

/* ---------- 3D viewport ---------- */

const CX = 1299;
const CY = 559;
const D = 13.5;

function project(x: number, y: number): P | null {
  const w = D + 0.808 * x + 0.375 * y;
  const wr = 0.808 * x;
  const wg = 0.375 * y;
  if (w < 1) return null;
  return [
    Math.round(((CX * D + wr * (CX - 358) + wg * (CX + 1666)) / w) * 10) / 10,
    Math.round((((CY * D + (wr + wg) * (CY - 351)) / w) * 10)) / 10,
  ];
}

function gridPath(): string {
  let d = "";
  for (let n = -40; n <= 60; n++) {
    if (n === 0) continue;
    for (const axis of [0, 1]) {
      const l: P[] = [];
      for (let t = -60; t <= 80; t += 0.5) {
        const p = axis ? project(n, t) : project(t, n);
        if (p && p[0] > 700 && p[0] < 1900 && p[1] < 1400) l.push(p);
      }
      if (l.length > 1) d += line([l[0], l[l.length - 1]]);
    }
  }
  return d;
}

function speckles(count: number, seed: number): string {
  let s = seed;
  const rnd = () => (s = (s * 16807) % 2147483647) / 2147483647;
  let d = "";
  for (let i = 0; i < count; i++) {
    d += `M${Math.round(85 + rnd() * 550)} ${Math.round(108 + rnd() * 265)}h${Math.round(rnd() * 7)}`;
  }
  return d;
}

const carBody =
  "M85 165 88 152 100 148 120 165 140 168 165 145 240 122 268 112 350 106 420 120 460 138 540 142 590 165 625 200 637 250 632 290 612 302 600 298 602 270 575 242 540 250 522 278 518 320 495 315 380 342 300 362 290 325 262 304 215 312 200 340 195 380 165 374 120 340 95 303 86 265 98 215 106 195Z";

function Car() {
  return (
    <g transform="translate(1180 470) scale(.33333)" strokeLinecap="round">
      <clipPath id="car-body">
        <path d={carBody} />
      </clipPath>
      <path d="M205 350 215 315 260 302 292 325 290 365 215 378ZM520 300 530 260 575 242 604 270 600 295 540 305Z" fill="#555" />
      <path d={carBody} fill="#ff7a00" />
      <g clipPath="url(#car-body)" fill="none">
        <path d="M165 165 340 115 400 130 430 175 350 180 260 200 240 220Z" fill="#9c6a3c" />
        <path d="M140 170 200 222 225 210 175 150Z" fill="#77706c" />
        <path d="M248 262 510 228 505 295 380 330 300 350 285 315 250 295Z" fill="#8f7b6d" />
        <path d="M170 150C180 175 200 190 220 205M200 140C210 160 235 180 250 195M235 128C250 150 275 170 290 190M270 120C290 145 310 165 325 185M310 112C330 140 350 160 365 180M350 110C375 135 395 155 420 175M385 115C410 140 430 160 460 185" stroke="#ff7a00" strokeWidth="11" />
        <path d="M185 150 250 200M222 135 285 190M260 125 320 180M300 118 350 175M340 112 390 170" stroke="#2a2118" strokeWidth="2" />
        <path d="M380 118 400 125 470 140 500 165 515 190 480 185 440 165Z" fill="#050505" />
        <path d="M400 120 500 190M420 125 510 175M440 130 515 195" stroke="#ff7a00" strokeWidth="2" strokeDasharray="6 7" />
        <path d="M135 170 150 180 200 222 180 215 150 195ZM150 290 170 285 175 315 155 305ZM105 200 150 235 140 240 110 215Z" fill="#080808" />
        <path d="M145 170 195 215M155 165 205 212M165 160 212 208" stroke="#c8c8c8" strokeWidth="2" strokeDasharray="2 4" />
        <path d="M250 280 505 238M255 300 505 262M280 320 505 280M330 325 505 295M260 270 290 320M300 262 500 290" stroke="#e07800" strokeWidth="4" />
        <path d="M255 290 505 250M290 325 505 288M325 262V350M377 250V340" stroke="#4b3a2c" strokeWidth="2" />
        <path d={speckles(260, 77)} stroke="#17110b" strokeWidth="3" />
        <path d={speckles(220, 4242)} stroke="#a08c7c" strokeWidth="3" />
        <path d="M440 225 480 205 500 240M590 170 610 230 600 260M100 260 130 300 180 350M110 240 190 270 240 260" stroke="#ff7a00" strokeWidth="12" />
      </g>
      <path d="M248 262C250 225 268 205 300 196L400 180C440 182 470 195 480 222L380 238 280 257Z" fill="#8a8a8d" stroke="#0a0a0a" strokeWidth="4" />
      <path d="M276 205 280 257M350 188 357 240M368 184 380 238M270 205 278 257" stroke="#0a0a0a" strokeWidth="4" fill="none" />
      <path d="M360 186 372 238" stroke="#ff7a00" strokeWidth="5" />
      <path d="M290 200 345 245M410 185 390 235M290 225 300 200" stroke="#333" strokeWidth="2" />
      <path d="M203 362 205 325C225 295 280 295 298 350M505 310C510 260 540 235 575 238 600 245 612 275 612 295" stroke="#ff7a00" strokeWidth="15" fill="none" />
      <g fill="#000">
        <circle cx="240" cy="348" r="24" />
        <circle cx="561" cy="275" r="26" />
        <path d="M262 110h14v12h-14zM290 130l20 5-4 12-20-8zM290 165l22 3-4 14-22-8z" />
        <circle cx="213" cy="378" r="6" />
        <circle cx="538" cy="302" r="6" />
        <circle cx="278" cy="259" r="6" />
        <circle cx="358" cy="240" r="6" />
        <circle cx="263" cy="366" r="5" />
        <circle cx="586" cy="293" r="5" />
      </g>
      <path
        d="M298 355h.1M327 347h.1M327 318h.1M327 300h.1M378 340h.1M378 325h.1M378 258h.1M282 282h.1M350 275h.1M203 268h.1M240 262h.1M507 308h.1M460 180h.1M497 212h.1M420 175h.1"
        stroke="#ff7a00"
        strokeWidth="15"
      />
      <path d="M358 215v30M358 285v45M305 267h30M382 262l40-10" stroke="#222" strokeWidth="3" />
      <circle cx="358" cy="265" r="38" fill="none" stroke="#fff" strokeWidth="4" />
      <circle cx="358" cy="265" r="38" fill="none" stroke="#e0402a" strokeWidth="4" strokeDasharray="15 14.800" />
    </g>
  );
}

function Viewport3D() {
  return (
    <svg className="absolute inset-0 size-full" aria-label="3D scene">
      <defs>
        <linearGradient id="fade" x1="0" y1="215" x2="0" y2="560" gradientUnits="userSpaceOnUse">
          <stop offset="0" stopColor="#4e4e4e" stopOpacity="0" />
          <stop offset="1" stopColor="#4e4e4e" stopOpacity="1" />
        </linearGradient>
      </defs>
      <g transform="translate(-1015 -63)">
        <path d={gridPath()} stroke="url(#fade)" strokeWidth="1.200" fill="none" />
        <path d="M1000 264 1600 854" stroke="#96384a" strokeWidth="1.500" />
        <path d="M1000 622 1600 495" stroke="#5d8420" strokeWidth="1.500" />
        <Car />
      </g>
    </svg>
  );
}

function AxisGizmo() {
  return (
    <svg viewBox="1475 140 96 96" className="absolute right-[13px] top-[77px] z-10 size-24 font-bold" fontSize="13" textAnchor="middle" aria-label="View axes">
      <circle cx="1507" cy="172" r="9" fill="#523a3f" stroke="#a03a4a" />
      <circle cx="1487" cy="196" r="10" fill="#52622f" stroke="#76b01c" strokeWidth="1.300" />
      <circle cx="1523" cy="224" r="9.500" fill="#3a4a60" stroke="#2f6db5" />
      <path d="M1523 188V160" stroke="#2e83e6" strokeWidth="2" />
      <path d="M1523 188 1555 181" stroke="#6fa21c" strokeWidth="2" />
      <path d="M1523 188 1539 204" stroke="#ff3653" strokeWidth="2" />
      <circle cx="1522" cy="152" r="10.500" fill="#2e83e6" />
      <circle cx="1559" cy="180" r="10" fill="#6fa21c" />
      <circle cx="1539" cy="204" r="10.500" fill="#ff3653" />
      <text x="1522" y="157" fill="#0d2b50">Z</text>
      <text x="1559" y="185" fill="#1d3000">Y</text>
      <text x="1539" y="209" fill="#5b0715">X</text>
    </svg>
  );
}

const navGlyphs: Record<string, React.ReactNode> = {
  zoom: (
    <>
      <circle cx="13" cy="8" r="7.500" fill="#e0e0e0" />
      <path d="M7.500 13 2 18.500" stroke="#e0e0e0" strokeWidth="3" strokeLinecap="round" />
      <path d="M13 4v8M9 8h8" stroke="#2a2a2a" strokeWidth="1.300" />
    </>
  ),
  hand: <path d="M5 12 2 8c-1-2 1-3 2-1.500l3 3L5.500 3c0-1.500 2-2 2.500-.5L9.500 8 10 1.500c.2-1.500 2.200-1.500 2.400 0L12.500 8 14 3c.5-1.500 2.400-1 2.300.5L15.500 9l2-3c1-1.200 2.500-.2 2 1L16 16l-2 3.500H9z" fill="#e0e0e0" />,
  cam: (
    <>
      <circle cx="5.500" cy="5" r="3.500" fill="#e0e0e0" />
      <circle cx="14" cy="5" r="4.200" fill="#e0e0e0" />
      <circle cx="5.500" cy="5" r="1" fill="#2a2a2a" />
      <circle cx="14" cy="5" r="1.300" fill="#2a2a2a" />
      <path d="M4 10h11v8H4zM16 13l4-2.500v7L16 15zM0 12h3v4H0z" fill="#e0e0e0" />
    </>
  ),
  ortho: <path d="M5 2h10l4 16H1zM8.500 2 7 18M12 2l1.500 16M4 7h12.500M2.500 12h15" fill="none" stroke="#e0e0e0" strokeWidth="1.500" />,
};

function NavButtons({ items, place }: { items: [string, string][]; place: string }) {
  return (
    <div className={`absolute z-10 flex flex-col gap-1 ${place}`}>
      {items.map(([n, label]) => (
        <button key={n} aria-label={label} className="flex size-[34px] items-center justify-center rounded-full bg-[#2a2a2a]/80">
          <svg viewBox="0 0 20 20" className="size-5" aria-hidden="true">
            {navGlyphs[n]}
          </svg>
        </button>
      ))}
    </div>
  );
}

function Collapser() {
  return (
    <button aria-label="Show sidebar" className="absolute right-0 top-[78px] z-10 flex h-6 w-[10px] items-center justify-center rounded-l-[4px] bg-[#2b2b2b] text-[#b0b0b0]">
      <Ico n="chevL" s="size-[13px]" />
    </button>
  );
}

/* ---------- top bars ---------- */

const tabs = ["Layout", "Modeling", "Sculpting", "UV Editing", "Texture Paint", "Shading", "Animation", "Rendering", "Compositing", "Geometry Nodes", "Scripting"];

function DataField({ icon, label, value, pin }: { icon: string; label: string; value: string; pin?: boolean }) {
  return (
    <div className="flex h-[25px] w-[240px] shrink-0 items-center overflow-hidden rounded-[5px] border border-[#3d3d3d] bg-[#1d1d1d] text-[#e0e0e0]">
      <button aria-label={`Browse ${label}`} className="flex h-full w-10 items-center justify-center border-r border-[#3d3d3d] bg-[#222]">
        <Ico n={icon} />
        <Ico n="chevD" s="size-[14px]" />
      </button>
      <input aria-label={label} defaultValue={value} className="w-0 grow bg-transparent pl-[9px] outline-none" />
      {pin && (
        <button aria-label="Pin" className="mr-1 text-[#6c6c6c]">
          <Ico n="pin" />
        </button>
      )}
      <button aria-label={`New ${label}`} className="flex h-full w-[25px] items-center justify-center bg-[#545454]">
        <Ico n="copy" />
      </button>
      <button aria-label={`Remove ${label}`} className="flex h-full w-[25px] items-center justify-center bg-[#2c2c2c] text-[#6c6c6c]">
        <Ico n="close" />
      </button>
    </div>
  );
}

function TopBar() {
  return (
    <div className="flex h-8 shrink-0 items-center bg-[#181818]">
      <button aria-label="Blender menu" className="ml-[13px] mr-1">
        <BlenderLogo mono />
      </button>
      <nav className="flex text-[#e0e0e0]">
        {["File", "Edit", "Render", "Window", "Help"].map((m) => (
          <button key={m} className="px-[9px] pb-px">
            {m}
          </button>
        ))}
      </nav>
      <div role="tablist" className="ml-[26px] flex h-full items-end gap-px">
        {tabs.map((t) => (
          <button
            key={t}
            role="tab"
            aria-selected={t === "UV Editing"}
            className={
              t === "UV Editing"
                ? "h-[26px] whitespace-nowrap rounded-t-[5px] bg-[#303030] px-[11px] text-white"
                : "h-[26px] whitespace-nowrap rounded-t-[5px] bg-[#1d1d1d] px-[11px] text-[#989898]"
            }
          >
            {t}
          </button>
        ))}
        <button aria-label="Add workspace" className="flex h-[26px] w-[26px] items-center justify-center rounded-t-[5px] bg-[#1d1d1d] text-[#989898]">
          <Ico n="plus" />
        </button>
      </div>
      <div className="ml-auto mr-[9px] flex gap-[6px]">
        <DataField icon="scene" label="Scene" value="Scene" pin />
        <DataField icon="images" label="View layer" value="ViewLayer" />
      </div>
    </div>
  );
}

function TitleBar() {
  return (
    <header className="flex h-[29px] shrink-0 items-center bg-black pl-[3px] text-white">
      <BlenderLogo />
      <h1 className="ml-[6px] font-['Open_Sans',sans-serif] text-[14px]">* (Unsaved) - Blender 4.0</h1>
      <div className="ml-auto flex">
        <button aria-label="Minimize" className="flex w-[58px] justify-center">
          <svg viewBox="0 0 12 12" className="size-3"><path d="M0 5.500h12" stroke="#fff" /></svg>
        </button>
        <button aria-label="Restore" className="flex w-[58px] justify-center">
          <svg viewBox="0 0 12 12" className="size-3"><path d="M.500 2.500h9v9h-9zM2.500 2.500v-2h9v9h-2" fill="none" stroke="#fff" /></svg>
        </button>
        <button aria-label="Close" className="mr-1 flex w-[58px] justify-center">
          <svg viewBox="0 0 12 12" className="size-3"><path d="M.500.500l11 11M11.500.500l-11 11" stroke="#fff" /></svg>
        </button>
      </div>
    </header>
  );
}

/* ---------- editors ---------- */

function UvEditor() {
  return (
    <section aria-label="UV editor" className="relative flex min-w-0 flex-[1011_1_0%] flex-col overflow-hidden rounded-[6px] bg-[#323232]">
      <UvCanvas />
      <div className="relative z-20 flex h-[31px] shrink-0 items-center bg-[#353535] pl-[10px] text-[#e0e0e0]">
        <DropIcon n="uvEditor" label="Editor type" w="w-[38px]" />
        <button aria-label="UV sync selection" className="ml-2 flex h-[23px] w-6 items-center justify-center rounded-[4px] bg-[#545454]">
          <Ico n="sync" />
        </button>
        <div className="ml-[7px]">
          <Segments w="w-6" items={[["vertMode", "Vertex"], ["edgeMode", "Edge"], ["faceMode", "Face"], ["islandMode", "Island"]]} />
        </div>
        <div className="ml-[7px]"><DropIcon n="sticky" label="Sticky selection mode" w="w-[38px]" /></div>
        <nav className="ml-[7px] flex items-center">
          {["View", "Select", "Image"].map((m) => (
            <button key={m} className="h-6 px-[9px]">{m}</button>
          ))}
          <div className="relative ml-[2px]">
            <button aria-haspopup="menu" aria-expanded="true" className="h-6 w-9 rounded-t-[4px] bg-[#464646] text-white">UV</button>
            <UvMenu />
          </div>
        </nav>
        <div className="ml-[21px]"><DropIcon n="pivot" label="Pivot point" w="w-[38px]" /></div>
        <div className="ml-2 flex h-6 shrink-0 overflow-hidden rounded-[5px] border border-[#3f3f3f] bg-[#262626]">
          <button aria-label="Snap" className="flex w-[23px] items-center justify-center bg-[#545454] text-[#b0b0b0]"><Ico n="magnet" /></button>
          <button aria-label="Snap to" className="flex w-[39px] items-center justify-center"><Ico n="snapInc" /><Ico n="chevD" s="size-[14px]" /></button>
        </div>
        <div className="ml-[7px] flex h-6 shrink-0 overflow-hidden rounded-[5px] border border-[#3f3f3f] bg-[#2c2c2c]">
          <button aria-label="Proportional editing" className="flex w-[23px] items-center justify-center bg-[#545454]"><Ico n="prop" /></button>
          <button aria-label="Falloff" className="flex w-[39px] items-center justify-center text-[#777]"><Ico n="falloff" /><Ico n="chevD" s="size-[14px]" /></button>
        </div>
        <div className="ml-[7px] flex h-6 shrink-0 overflow-hidden rounded-[5px] border border-[#3f3f3f] bg-[#262626]">
          <button aria-label="Browse image" className="flex w-[37px] items-center justify-center"><Ico n="image" /><Ico n="chevD" s="size-[14px]" /></button>
          <button className="flex w-[75px] items-center gap-[11px] border-r border-[#3f3f3f] bg-[#545454] pl-[6px]"><Ico n="plus" />New</button>
          <button className="flex w-[74px] items-center gap-[8px] bg-[#545454] pl-[4px]"><Ico n="folder" />Open</button>
        </div>
        <button aria-label="Pin image" className="ml-[10px] text-[#9a9a9a]"><Ico n="pin" /></button>
        {[["gizmo", "Gizmos"], ["overlay", "Overlays"]].map(([n, label], i) => (
          <div key={n} className={`flex h-6 shrink-0 overflow-hidden rounded-[5px] border border-[#3f3f3f] bg-[#262626] ${i ? "ml-[7px]" : "ml-auto"}`}>
            <button aria-label={label} className="flex w-[23px] items-center justify-center bg-[#4772b3] text-white"><Ico n={n} /></button>
            <button aria-label={`${label} options`} className="flex w-[24px] items-center justify-center"><Ico n="chevD" s="size-[14px]" /></button>
          </div>
        ))}
        <div className="ml-[7px] h-6 w-[2px] shrink-0 rounded-l bg-[#262626]" />
      </div>
      <div className="relative z-10 flex h-[33px] shrink-0 items-center pl-[10px]">
        <Segments w="w-[23px]" items={[["selBox", "Set"], ["selAdd", "Extend"], ["selSub", "Subtract"]]} />
      </div>
      <div className="relative z-10 ml-[10px] flex w-12 flex-col gap-[7px] pt-[9px]">
        <ToolGroup tools={[["select", "Select box"], ["cursor", "Cursor"]]} corner={["select"]} />
        <ToolGroup tools={[["move", "Move"], ["rotate", "Rotate"], ["scale", "Scale"], ["transform", "Transform"]]} />
        <ToolGroup tools={[["annotate", "Annotate"]]} corner={["annotate"]} />
        <ToolGroup tools={[["rip", "Rip region"]]} />
        <ToolGroup tools={[["grab", "Grab"], ["relax", "Relax"], ["pinch", "Pinch"]]} />
      </div>
      <NavButtons place="right-[11px] top-[74px]" items={[["zoom", "Zoom"], ["hand", "Pan"]]} />
      <Collapser />
    </section>
  );
}

function View3dEditor() {
  return (
    <section aria-label="3D viewport" className="relative flex min-w-0 flex-[570_1_0%] flex-col overflow-hidden rounded-[6px] bg-[#3d3d3d]">
      <Viewport3D />
      <div className="relative z-20 flex h-[31px] shrink-0 items-center overflow-hidden bg-[#353535] pl-[9px] text-[#e0e0e0]">
        <DropIcon n="view3d" label="Editor type" />
        <div className={`${dd} relative ml-2 w-[136px]`}>
          <span className="pointer-events-none absolute left-1 top-[2px]"><Ico n="editMode" /></span>
          <select aria-label="Mode" className="h-full w-full appearance-none bg-transparent pl-[31px] outline-none">
            <option>Edit Mode</option>
          </select>
          <span className="pointer-events-none absolute right-0 top-[4px]"><Ico n="chevD" s="size-[14px]" /></span>
        </div>
        <div className="ml-[7px]">
          <Segments w="w-6" items={[["cubeVert", "Vertex"], ["cubeEdge", "Edge"], ["cubeFace", "Face"]]} />
        </div>
        <nav className="ml-[6px] flex">
          {["View", "Select", "Add", "Mesh", "Vertex", "Edge"].map((m) => (
            <button key={m} className="px-[9px] pb-px">{m}</button>
          ))}
        </nav>
      </div>
      <div className="relative z-10 flex h-[33px] shrink-0 justify-between text-[#e0e0e0]">
        <div className="flex items-center rounded-br-[6px] bg-[#353535] pl-[9px] pr-[10px]">
          <Segments w="w-[23px]" items={[["selBox", "Set"], ["selAdd", "Extend"], ["selSub", "Subtract"], ["selXor", "Difference"], ["selAnd", "Intersect"]]} />
        </div>
        <div className="flex items-center rounded-bl-[6px] bg-[#353535] pl-[12px] pr-[9px]">
          <Ico n="butterfly" />
          <div className="ml-[5px] flex h-[23px] gap-px overflow-hidden rounded-[4px] bg-[#3d3d3d]">
            {["X", "Y", "Z"].map((a) => (
              <button key={a} aria-label={`Mirror ${a}`} className="w-[21px] bg-[#545454]">{a}</button>
            ))}
          </div>
          <button aria-label="Auto merge" className="ml-2 flex h-[23px] w-6 items-center justify-center rounded-[4px] bg-[#4c4c4c] text-[#b5b5b5]"><Ico n="automerge" /></button>
          <button className={`${dd} ml-[7px] w-20 gap-[6px] pl-1`}>
            Options
            <Ico n="chevD" s="size-[14px]" />
          </button>
        </div>
      </div>
      <div className="relative z-10 ml-[9px] flex min-h-0 grow basis-0 items-start gap-[22px] overflow-hidden pt-[9px]">
        <div className="flex w-12 shrink-0 flex-col gap-[7px]">
          <ToolGroup tools={[["select", "Select box"], ["cursor", "Cursor"]]} corner={["select"]} />
          <ToolGroup tools={[["move", "Move"], ["rotate", "Rotate"], ["scale", "Scale"], ["transform", "Transform"]]} corner={["scale"]} />
          <ToolGroup tools={[["annotate", "Annotate"], ["measure", "Measure"]]} corner={["annotate"]} />
          <ToolGroup tools={[["addCube", "Add cube"]]} corner={["addCube"]} />
          <ToolGroup
            tools={[
              ["extrude", "Extrude region"], ["inset", "Inset faces"], ["bevel", "Bevel"], ["loopcut", "Loop cut"], ["knife", "Knife"], ["polybuild", "Poly build"],
              ["spin", "Spin"], ["smooth", "Smooth"], ["edgeslide", "Edge slide"], ["shrink", "Shrink/fatten"], ["shear", "Shear"], ["rip", "Rip region"],
            ]}
            corner={["extrude", "loopcut", "knife", "spin", "smooth", "edgeslide", "shrink", "shear"]}
          />
        </div>
        <div className="leading-[22px] text-white [text-shadow:1px_1px_2px_#000]">
          <p>User Perspective</p>
          <p>(1) fabia_wrc</p>
        </div>
      </div>
      <AxisGizmo />
      <NavButtons place="right-[10px] top-[177px]" items={[["zoom", "Zoom"], ["hand", "Pan"], ["cam", "Camera view"], ["ortho", "Perspective / orthographic"]]} />
      <Collapser />
    </section>
  );
}

/* ---------- right column ---------- */

function SearchBox({ label }: { label: string }) {
  return (
    <label className="flex h-[25px] w-[144px] shrink-0 items-center rounded-[5px] border border-[#3d3d3d] bg-[#1b1b1b] pl-[6px] text-[#d0d0d0]">
      <Ico n="search" />
      <input aria-label={label} className="w-0 grow bg-transparent px-1 outline-none" />
    </label>
  );
}

function Outliner() {
  return (
    <section aria-label="Outliner" className="shrink-0 overflow-hidden rounded-[6px] bg-[#282828] pb-[15px] text-[#c8c8c8]">
      <div className="flex h-[33px] items-center overflow-hidden pb-1 pl-[10px]">
        <DropIcon n="tree" label="Editor type" w="w-10" />
        <div className="ml-[6px]"><DropIcon n="images" label="Display mode" w="w-10" /></div>
        <div className="ml-auto"><SearchBox label="Search outliner" /></div>
        <div className="ml-[19px]"><DropIcon n="filter" label="Filter" w="w-10" /></div>
        <div className="ml-[6px] h-6 w-[7px] shrink-0 rounded-l-[5px] bg-[#545454]" />
      </div>
      <div role="tree">
        <div role="treeitem" className="flex h-[25px] items-center gap-[8px] pl-[29px]">
          <Ico n="box" />
          Scene Collection
        </div>
        <div role="treeitem" className="flex h-[25px] items-center bg-[#2b2b2b] pl-[30px] pr-[15px] text-[#c8c8c8]">
          <Ico n="arrowD" s="size-[14px]" />
          <span className="ml-[6px] flex size-6 items-center justify-center rounded-[5px] border border-[#777] bg-[#505050] text-[#e0e0e0]"><Ico n="box" /></span>
          <span className="ml-[5px]">Collection</span>
          <span className="ml-auto flex gap-[7px] text-[#e6e6e6]"><Ico n="check" /><Ico n="eye" /><Ico n="camera" /></span>
        </div>
        <div role="treeitem" className="flex h-[25px] items-center bg-[#334d80] pl-[4px] pr-[15px] text-[#e6e6e6]">
          <Ico n="editMode" />
          <span className="ml-[14px] h-3 w-px bg-[#6b6f7c]" />
          <span className="ml-[18px] flex text-[#c8c8c8]"><Ico n="arrowR" s="size-[14px]" /></span>
          <span className="ml-[6px] flex size-6 items-center justify-center rounded-[5px] border border-[#7587a8] bg-[#62718f] text-[#cf8a5a]"><Ico n="objTri" /></span>
          <span className="ml-[5px] text-[#f0a72e]">fabia_wrc</span>
          <span className="ml-auto text-[#6c94ea]"><Ico n="wrench" /></span>
          <span className="ml-[4px] mr-[30px] flex size-6 items-center justify-center rounded-[5px] border border-[#2c7d80] bg-[#265f75] text-[#00d5a0]"><Ico n="mesh" /></span>
          <span className="flex gap-[7px]"><Ico n="eye" /><Ico n="camera" /></span>
        </div>
        <div className="h-[25px] bg-[#2b2b2b]" />
        <div className="h-[25px]" />
      </div>
    </section>
  );
}

const Grip = ({ shade = true }: { shade?: boolean }) => (
  <svg viewBox="0 0 15 8" className="h-2 w-[15px] shrink-0" aria-hidden="true">
    <path d="M0 1h2M4 1h2M8 1h2M12 1h2M0 5h2M4 5h2M8 5h2M12 5h2" stroke="#b8b8b8" strokeWidth="1.500" />
    {shade && <path d="M0 2.500h2M4 2.500h2M8 2.500h2M12 2.500h2M0 6.500h2M4 6.500h2M8 6.500h2M12 6.500h2" stroke="#111" />}
  </svg>
);

function Panel({ title, children }: { title: string; children?: React.ReactNode }) {
  return (
    <section className="mb-[2px] rounded-[5px] bg-[#3d3d3d] text-[#e0e0e0]">
      <h2 className="flex h-[31px] items-center pl-[7px] pr-2">
        <button aria-expanded={!!children} className="flex grow items-center gap-[2px] text-left">
          <span className="flex text-[#b0b0b0]">{children ? <Ico n="chevD" /> : <Ico n="chevR" />}</span>
          {title}
        </button>
        <Grip />
      </h2>
      {children}
    </section>
  );
}

function ListBox({ label, on }: { label: string; on?: boolean }) {
  const tone = on ? "bg-[#545454] text-[#e6e6e6]" : "bg-[#474747] text-[#7a7a7a]";
  return (
    <div className="flex gap-3 px-[11px] pt-[11px]">
      <div role="listbox" aria-label={label} className="flex h-[98px] grow items-end rounded-[4px] border-b-2 border-[#333] bg-[#2b2b2b] pb-[3px] pl-[10px] text-[#b8b8b8]">
        <span className="mr-[91px]"><Ico n="arrowR" s="size-[15px]" /></span>
        <span className="pb-[3px]"><Grip shade={false} /></span>
      </div>
      <div className="w-[23px] shrink-0">
        <button aria-label={`Add to ${label}`} className={`flex h-[23px] w-full items-center justify-center rounded-t-[4px] ${tone}`}><Ico n="plus" /></button>
        <button aria-label={`Remove from ${label}`} className="mt-px flex h-6 w-full items-center justify-center rounded-b-[4px] bg-[#474747] text-[#7a7a7a]"><Ico n="minus" /></button>
        <button aria-label={`${label} specials`} className="mt-[9px] flex h-[23px] w-full items-center justify-center rounded-[4px] bg-[#222] text-[#e0e0e0]"><Ico n="chevD" /></button>
      </div>
    </div>
  );
}

const propTabs: [string, string, string][][] = [
  [["tools", "Tool", "text-[#b4b4b4]"]],
  [
    ["render", "Render", "text-[#b4b4b4]"],
    ["output", "Output", "text-[#b4b4b4]"],
    ["images", "View layer", "text-[#b4b4b4]"],
    ["scene", "Scene", "text-[#b4b4b4]"],
    ["world", "World", "text-[#b5525c]"],
  ],
  [["boxLine", "Collection", "text-[#d8d8d8]"]],
  [
    ["objBox", "Object", "text-[#c08048]"],
    ["wrenchFill", "Modifiers", "text-[#5d83cf]"],
    ["particles", "Particles", "text-[#5d83cf]"],
    ["physics", "Physics", "text-[#5d83cf]"],
    ["constraint", "Constraints", "text-[#5d83cf]"],
    ["mesh", "Data", "text-[#00d5a0]"],
    ["material", "Material", "text-[#b5525c]"],
  ],
];

function Properties() {
  return (
    <section aria-label="Properties" className="flex min-h-0 grow flex-col overflow-hidden rounded-[6px] bg-[#303030] text-[#e0e0e0]">
      <div className="flex h-[31px] shrink-0 items-center pl-[10px] pr-[10px]">
        <DropIcon n="props" label="Editor type" w="w-10" />
        <div className="ml-[38px]"><SearchBox label="Search properties" /></div>
        <button aria-label="Options" className={`${dd} ml-auto w-[25px]`}><Ico n="chevD" s="size-[14px]" /></button>
      </div>
      <div className="flex min-h-0 grow">
        <div role="tablist" aria-label="Property tabs" className="flex w-[35px] shrink-0 flex-col gap-[9px] bg-[#1c1c1c] pt-[9px]">
          {propTabs.map((g, i) => (
            <div key={i} className="flex flex-col shadow-[0_1px_0_#141414]">
              {g.map(([n, label, color]) => (
                <button
                  key={n}
                  role="tab"
                  aria-label={label}
                  aria-selected={n === "mesh"}
                  className={`ml-[2px] flex h-[35px] items-center justify-center rounded-l-[5px] ${color} ${n === "mesh" ? "bg-[#303030]" : ""}`}
                >
                  <Ico n={n} />
                </button>
              ))}
            </div>
          ))}
        </div>
        <div className="min-w-0 grow pl-[10px] pr-[9px]">
          <div className="flex h-[44px] items-center pl-1 pr-[3px]">
            <Ico n="objBox" />
            <span className="ml-[10px]">fabia_wrc</span>
            <span className="ml-[14px] mr-[6px]"><Ico n="chevR" /></span>
            <Ico n="mesh" />
            <span className="ml-[10px]">fabia_wrc</span>
            <button aria-label="Pin" className="ml-auto text-[#9a9a9a]"><Ico n="pin" /></button>
          </div>
          <div className="mb-3 mt-[11px] flex h-[25px] items-center overflow-hidden rounded-[5px] border border-[#3d3d3d] bg-[#1b1b1b]">
            <button aria-label="Browse mesh data" className="flex h-full w-[39px] items-center justify-center border-r border-[#3d3d3d] bg-[#242424]">
              <Ico n="mesh" />
              <Ico n="chevD" s="size-[14px]" />
            </button>
            <input aria-label="Mesh name" defaultValue="fabia_wrc" className="w-0 grow bg-transparent pl-[9px] outline-none" />
            <button aria-label="Fake user" className="flex h-full w-6 items-center justify-center bg-[#545454] text-[#a8a8a8]"><Ico n="shield" /></button>
          </div>
          <Panel title="Vertex Groups">
            <div className="pb-[10px]"><ListBox label="Vertex Groups" on /></div>
          </Panel>
          <Panel title="Shape Keys">
            <ListBox label="Shape Keys" />
            <label className="flex h-[41px] items-center gap-[5px] pb-1 pl-[11px]">
              <input type="checkbox" className="size-[17px] appearance-none rounded-[3px] bg-[#545454]" />
              Add Rest Position
            </label>
          </Panel>
          {["UV Maps", "Color Attributes", "Attributes", "Normals", "Texture Space", "Remesh", "Geometry Data", "Custom Properties"].map((t) => (
            <Panel key={t} title={t} />
          ))}
        </div>
      </div>
    </section>
  );
}

/* ---------- status bar ---------- */

function Mouse({ part }: { part: "l" | "m" | "r" }) {
  const fill = { l: "M1 8V5a4 4 0 0 1 4-4h1v7z", m: "M5.500 3h3v6h-3z", r: "M13 8V5a4 4 0 0 0-4-4H8v7z" }[part];
  return (
    <svg viewBox="0 0 14 19" className="h-[19px] w-[14px]" aria-hidden="true">
      <rect x=".700" y=".700" width="12.600" height="17.600" rx="4" fill="none" stroke="#909090" />
      <path d={fill} fill="#a0a0a0" />
    </svg>
  );
}

function StatusBar() {
  return (
    <footer className="flex h-[26px] shrink-0 items-center bg-[#181818] pl-[15px] pr-4 pt-[2px] text-[#909090]">
      <span className="flex w-[281px] items-center gap-[14px]"><Mouse part="l" />Change Frame</span>
      <span className="flex w-[281px] items-center gap-[14px]"><Mouse part="m" />Pan View</span>
      <span className="flex items-center gap-[14px]"><Mouse part="r" />UV</span>
      <span className="ml-auto">4.0.1</span>
    </footer>
  );
}

export default function App() {
  return (
    <div className="flex h-screen flex-col overflow-hidden bg-[#181818] font-[Inter,sans-serif] text-[14px] leading-5 [font-feature-settings:'cv08']">
      <TitleBar />
      <TopBar />
      <main className="flex min-h-0 grow gap-[3px] px-px pt-[2px]">
        <UvEditor />
        <View3dEditor />
        <div className="flex min-w-0 flex-[331_1_0%] flex-col gap-[3px]">
          <Outliner />
          <Properties />
        </div>
      </main>
      <StatusBar />
    </div>
  );
}
